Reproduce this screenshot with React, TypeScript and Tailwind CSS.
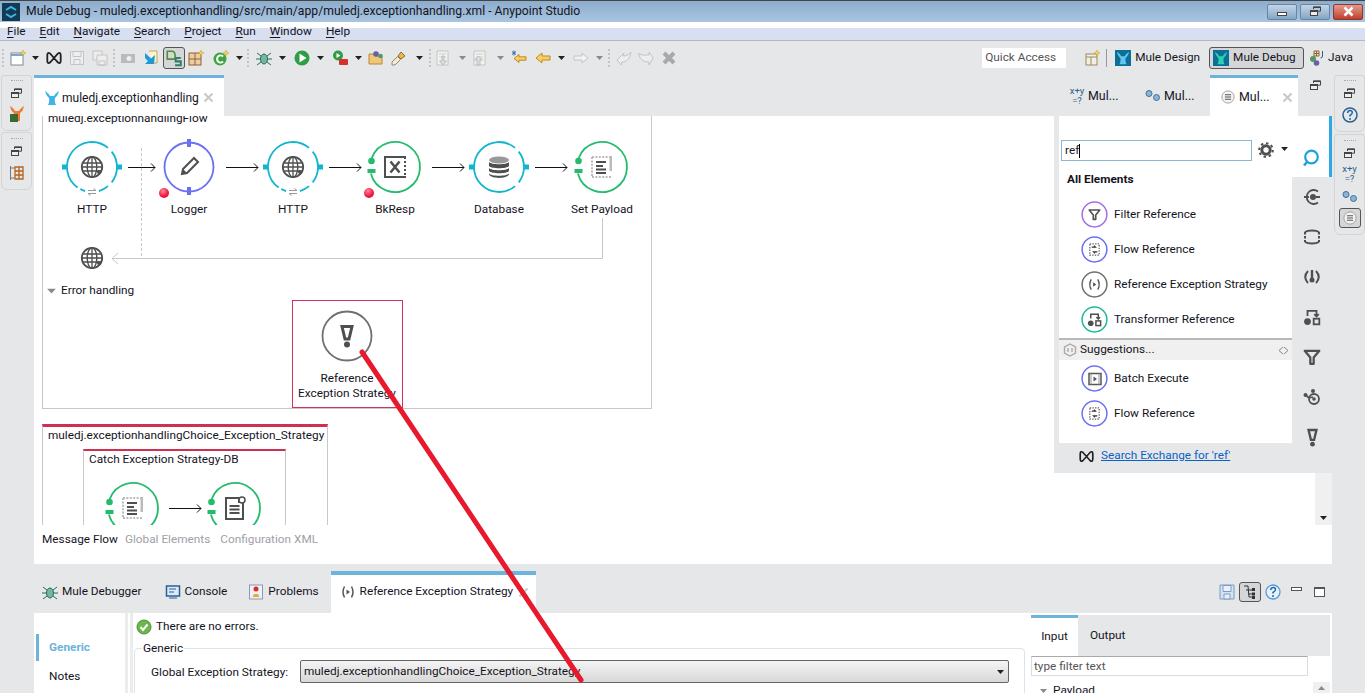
import type { ReactNode } from 'react'

const ink = '#4f4f4f'

function Svg({ s = 16, vb = 16, className = '', children }: { s?: number; vb?: number; className?: string; children: ReactNode }) {
  return (
    <svg width={s} height={s} viewBox={`0 0 ${vb} ${vb}`} fill="none" className={`shrink-0 ${className}`}>
      {children}
    </svg>
  )
}

const Caret = ({ className = '', dim = false }: { className?: string; dim?: boolean }) => (
  <svg width="7" height="4" viewBox="0 0 7 4" className={`shrink-0 ${className}`}>
    <path d="M0 0h7L3.5 4z" fill={dim ? '#8a8a8a' : '#222'} />
  </svg>
)
const Grip = ({ className = '' }: { className?: string }) => (
  <span className={`h-[18px] w-[2px] shrink-0 border-l-2 border-dotted border-[#c4c4c4] ${className}`} />
)
const Restore = ({ className = '' }: { className?: string }) => (
  <Svg s={11} vb={11} className={className}>
    <path d="M3.5 3V.8h7v4.4H8" stroke="#444" />
    <rect x=".5" y="4.5" width="7" height="5" stroke="#444" fill="#eee" />
    <path d="M.5 5.5h7M3.5 1.5h7" stroke="#444" />
  </Svg>
)
const Close = ({ className = '' }: { className?: string }) => (
  <Svg s={11} vb={11} className={className}>
    <path d="M1.5 1.5l8 8M9.500 1.5l-8 8" stroke="#c8c8c8" strokeWidth="2" />
  </Svg>
)
const MuleLogo = ({ s = 16, c = '#3db4ea' }: { s?: number; c?: string }) => (
  <Svg s={s}>
    <path d="M1 1c1 4 3 6 4 7 .5 3 0 5-1 7h8c-1-2-1.5-4-1-7 1-1 3-3 4-7-2 1-4 3-5 5H6C5 4 3 2 1 1z" fill={c} />
  </Svg>
)
const XY = ({ className = '' }: { className?: string }) => (
  <span className={`w-[16px] shrink-0 text-center text-[9.5px] leading-[10px] text-[#2d5f8e] ${className}`}>x+y<br />=?</span>
)
const Dots = ({ className = '' }: { className?: string }) => (
  <Svg className={className}>
    <circle cx="4" cy="5.5" r="3" fill="#8db4d6" stroke="#3f6f99" />
    <circle cx="11.5" cy="9.5" r="3" fill="#8db4d6" stroke="#3f6f99" />
  </Svg>
)
const MenuDoc = ({ s = 16 }: { s?: number }) => (
  <Svg s={s}>
    <circle cx="8" cy="8" r="7" stroke="#999" fill="#f4f4f4" />
    <path d="M4.5 5.5h7M4.5 8h7M4.500 10.500h7" stroke="#555" strokeWidth="1.200" />
  </Svg>
)
const Exchange = ({ s = 16, className = '' }: { s?: number; className?: string }) => (
  <Svg s={s} className={className}>
    <path d="M8 8L4 3.5Q1.5 1.800 1.300 5v6q.2 3.200 2.700 1.500l8-9Q14.500 1.800 14.700 5v6q-.2 3.200-2.700 1.500z" stroke="#222" strokeWidth="1.800" />
  </Svg>
)
const GearStar = ({ c }: { c: string }) => (
  <path d="M13 0l.9 2.100L16 3l-2.100.9L13 6l-.9-2.100L10 3l2.100-.9z" fill={c} stroke="#b8912f" strokeWidth=".4" />
)

function Globe({ s = 24 }: { s?: number }) {
  return (
    <Svg s={s} vb={24}>
      <circle cx="12" cy="12" r="10.200" stroke={ink} strokeWidth="1.800" />
      <ellipse cx="12" cy="12" rx="4.800" ry="10.200" stroke={ink} strokeWidth="1.400" />
      <path d="M12 2v20M2.500 8h19M2 12h20M2.500 16h19" stroke={ink} strokeWidth="1.300" />
      <circle cx="19" cy="17" r="2" fill={ink} />
    </Svg>
  )
}

const pol = (a: number, r = 25) => {
  const t = (a * Math.PI) / 180
  return `${(32 + r * Math.cos(t)).toFixed(2)} ${(32 + r * Math.sin(t)).toFixed(2)}`
}
const arc = (a: number, b: number) => `M${pol(a)}A25 25 0 ${b - a > 180 ? 1 : 0} 1 ${pol(b)}`

function Ring({ kind, children }: { kind: 'source' | 'proc' | 'green' | 'gray' | 'conn'; children: ReactNode }) {
  const cyan = '#12b5d0'
  const green = '#25bb6d'
  const blue = '#6b70f5'
  return (
    <div className="relative h-[64px] w-[64px] shrink-0">
      <svg width="64" height="64" viewBox="0 0 64 64" fill="none" className="absolute inset-0">
        {kind === 'source' && (
          <g stroke={cyan} strokeWidth="1.800">
            <path d={arc(125, 310)} />
            <path d={arc(-38, 38)} />
            <path d={arc(50, 74)} />
            <path d={arc(106, 118)} />
            <rect x="2.5" y="30" width="4" height="4" fill={cyan} strokeWidth="1" />
            <rect x="57.5" y="30" width="4" height="4" fill={cyan} strokeWidth="1" />
            <path d="M28 55.500h8l-2.500-2M36 58.500h-8l2.500 2" stroke="#999" strokeWidth="1" />
          </g>
        )}
        {kind === 'conn' && (
          <g stroke={cyan} strokeWidth="1.800">
            <path d={arc(50, 310)} />
            <path d={arc(-38, 38)} />
            <rect x="2.5" y="30" width="4" height="4" fill={cyan} strokeWidth="1" />
            <rect x="57.5" y="30" width="4" height="4" fill={cyan} strokeWidth="1" />
          </g>
        )}
        {kind === 'proc' && (
          <g>
            <circle cx="32" cy="32" r="24.500" stroke={blue} strokeWidth="1.800" />
            <rect x="30" y="4" width="4" height="8" fill={blue} />
            <rect x="30" y="52" width="4" height="8" fill={blue} />
          </g>
        )}
        {kind === 'green' && (
          <g>
            <path d={arc(-160, 165)} stroke={green} strokeWidth="1.800" />
            <circle cx="8.5" cy="26" r="3.300" fill={green} />
            <rect x="4.5" y="34" width="8" height="4" fill={green} />
          </g>
        )}
        {kind === 'gray' && <circle cx="32" cy="32" r="24.500" stroke="#707070" strokeWidth="1.800" />}
      </svg>
      <div className="absolute inset-0 flex items-center justify-center">{children}</div>
    </div>
  )
}

function PayloadIcon() {
  return (
    <Svg s={24} vb={24}>
      <path d="M2 2h18M2 22h20M2 2v20" stroke="#bbb" strokeWidth="2" strokeDasharray="2 1.400" />
      <rect x="19.5" y="1" width="2.500" height="15" fill="#bbb" />
      <path d="M6 7h10M6 11h7M6 14.500h10M6 18h10" stroke={ink} strokeWidth="2" />
    </Svg>
  )
}
function Exclaim({ s = 24, c = ink }: { s?: number; c?: string }) {
  return (
    <Svg s={s} vb={24}>
      <path d="M7 2.500h10l-3 12.500h-4z" stroke={c} strokeWidth="3" />
      <circle cx="12" cy="20.500" r="3" fill={c} />
    </Svg>
  )
}
const FlowRefIcon = ({ s = 16 }: { s?: number }) => (
  <Svg s={s}>
    <path d="M3 2h10v12H3z" stroke="#666" strokeWidth="1.300" strokeDasharray="1.500 1.300" />
    <path d="M5 5.500h4L7.500 4M11 10.500H7L8.500 12" stroke="#333" strokeWidth="1.300" />
  </Svg>
)
const RefExIcon = ({ s = 16 }: { s?: number }) => (
  <Svg s={s}>
    <path d="M4.500 2.500Q1.500 8 4.500 13.500M11.500 2.500Q14.500 8 11.500 13.500" stroke="#555" strokeWidth="1.500" />
    <path d="M6.500 5.500L10 8l-3.500 2.500z" fill="#555" />
  </Svg>
)
const FilterIcon = ({ s = 16, c = ink }: { s?: number; c?: string }) => (
  <Svg s={s}>
    <path d="M1.500 2.500h13l-5 6V14h-3V8.500z" stroke={c} strokeWidth="2" strokeLinejoin="round" />
  </Svg>
)
const TransIcon = ({ s = 16, c = ink }: { s?: number; c?: string }) => (
  <Svg s={s}>
    <circle cx="4" cy="12" r="3" fill={c} />
    <rect x="9.5" y="9.5" width="5" height="5" stroke={c} strokeWidth="1.600" />
    <path d="M4 7V2.500h8V7M10 5.500l2 2 2-2" stroke={c} strokeWidth="1.600" />
  </Svg>
)
const BatchIcon = () => (
  <Svg>
    <rect x="2" y="2.500" width="12" height="11" stroke="#555" strokeWidth="1.500" />
    <path d="M6.500 5.500L10 8l-3.500 2.500z" fill="#555" />
    <path d="M4 2.500v11M12 2.500v11" stroke="#999" />
  </Svg>
)

function PaletteItem({ color, label, children, className = '' }: { color: string; label: string; children: ReactNode; className?: string }) {
  return (
    <div className={`flex h-[35px] items-center pl-[22px] ${className}`}>
      <svg width="27" height="27" viewBox="0 0 27 27" className="shrink-0">
        <circle cx="13.500" cy="13.500" r="12.400" fill="none" stroke={color} strokeWidth="1.500" />
      </svg>
      <span className="-ml-[21px] flex w-[15px] shrink-0 justify-center">{children}</span>
      <span className="ml-[12px]">{label}</span>
    </div>
  )
}

function Node({ label, className, children }: { label: ReactNode; className: string; children: ReactNode }) {
  return (
    <div className={`absolute flex w-[120px] flex-col items-center ${className}`}>
      {children}
      <div className="mt-[3px] text-center leading-[15px]">{label}</div>
    </div>
  )
}

const BreakDot = ({ className }: { className: string }) => (
  <span className={`absolute h-[10px] w-[10px] rounded-full bg-[radial-gradient(circle_at_40%_30%,#ff8a9c,#f0103c_60%)] ${className}`} />
)

function Canvas() {
  return (
    <div className="relative h-full w-[1020px] shrink-0 overflow-hidden bg-white">
      {/* flujo principal */}
      <div className="absolute left-[8px] top-[-20px] h-[313px] w-[610px] border-b border-l border-r border-[#c8c8c8]" />
      <div className="absolute left-[14px] top-[-5px] leading-[15px]">muledj.exceptionhandlingFlow</div>
      <svg width="1020" height="409" className="absolute inset-0" fill="none">
        {[[94, 121], [192, 224], [295, 327], [398, 430], [501, 533]].map(([a, b]) => (
          <g key={a} stroke="#111">
            <path d={`M${a} 51.5H${b}`} />
            <path d={`M${b - 4} 47.5l4 4-4 4`} />
          </g>
        ))}
        <path d="M107.500 32v108" stroke="#c8c8c8" strokeDasharray="3 2" />
        <path d="M568.500 102v40.500H78" stroke="#c8c8c8" />
        <path d="M84 137l-6 5.500 6 5.500" stroke="#c8c8c8" />
        <path d="M135 392.500h32M163 388.500l4 4-4 4" stroke="#111" />
      </svg>
      <Node label="HTTP" className="left-[-2px] top-[19px]">
        <Ring kind="source"><Globe /></Ring>
      </Node>
      <Node label="Logger" className="left-[95px] top-[19px]">
        <Ring kind="proc">
          <Svg s={24} vb={24}>
            <path d="M5 19l1-5L17 3l4 4-11 11z" stroke={ink} strokeWidth="2" />
            <path d="M5 19l1-5 4 4z" fill={ink} />
          </Svg>
        </Ring>
      </Node>
      <Node label="HTTP" className="left-[199px] top-[19px]">
        <Ring kind="source"><Globe /></Ring>
      </Node>
      <Node label="BkResp" className="left-[301px] top-[19px]">
        <Ring kind="green">
          <Svg s={24} vb={24}>
            <path d="M23 2H2v20h21" stroke={ink} strokeWidth="2" />
            <path d="M22 2v20" stroke={ink} strokeWidth="2" strokeDasharray="2 2" />
            <path d="M7.500 6.500l9 11M16.500 6.500l-9 11" stroke={ink} strokeWidth="2.500" />
          </Svg>
        </Ring>
      </Node>
      <Node label="Database" className="left-[405px] top-[19px]">
        <Ring kind="conn">
          <Svg s={24} vb={24}>
            <ellipse cx="12" cy="5" rx="10" ry="3.500" fill="#999" />
            <path d="M2 7c2 3 18 3 20 0v4c-2 3-18 3-20 0zM2 13c2 3 18 3 20 0v3c-2 3-18 3-20 0zM2 18.500c2 3 18 3 20 0v1c-2 4.500-18 4.500-20 0z" fill={ink} />
          </Svg>
        </Ring>
      </Node>
      <Node label="Set Payload" className="left-[508px] top-[19px]">
        <Ring kind="green"><PayloadIcon /></Ring>
      </Node>
      <BreakDot className="left-[125px] top-[72px]" />
      <BreakDot className="left-[330px] top-[72px]" />
      <div className="absolute left-[46px] top-[130px]"><Globe /></div>
      <div className="absolute left-[14px] top-[167px] flex items-center gap-[6px] leading-[15px]">
        <Caret dim className="scale-[1.3]" />
        <span>Error handling</span>
      </div>
      <div className="absolute left-[258px] top-[184px] h-[108px] w-[111px] border border-[#d4305a]" />
      <Node
        label={<>Reference<br />Exception Strategy</>}
        className="left-[253px] top-[188px]"
      >
        <Ring kind="gray"><Exclaim /></Ring>
      </Node>
      {/* flujo de excepcion */}
      <div className="absolute left-[8px] top-[308px] h-[120px] w-[286px] border-x border-[#c8c8c8] border-t-[3px] border-t-[#cf2f52]" />
      <div className="absolute left-[14px] top-[312px] leading-[15px]">muledj.exceptionhandlingChoice_Exception_Strategy</div>
      <div className="absolute left-[49px] top-[333px] h-[100px] w-[203px] border-x border-[#c8c8c8] border-t-[2px] border-t-[#cf2f52]" />
      <div className="absolute left-[55px] top-[336px] leading-[15px]">Catch Exception Strategy-DB</div>
      <div className="absolute left-[67px] top-[360px]"><Ring kind="green"><PayloadIcon /></Ring></div>
      <div className="absolute left-[169px] top-[360px]">
        <Ring kind="green">
          <Svg s={24} vb={24}>
            <path d="M3 2h13v4h4v17H3z" stroke={ink} strokeWidth="2" />
            <path d="M6.500 10h10M6.500 13.500h10M6.500 17h10" stroke={ink} strokeWidth="1.800" />
            <circle cx="19" cy="4" r="3" fill="#fff" stroke={ink} strokeWidth="1.500" />
          </Svg>
        </Ring>
      </div>
    </div>
  )
}

function Palette() {
  const rail = 'flex h-[40px] items-center justify-center'
  return (
    <div className="flex h-[357px] bg-[#e6e7e9] pl-[5px]">
      <div className="flex w-[233px] flex-col">
        <div className="h-[327px] bg-white">
          <div className="flex h-[45px] items-end pl-[2px]">
            <div className="flex h-[21px] w-[191px] items-center border border-[#8ab8d4] pl-[3px] leading-none">
              ref<span className="h-[14px] w-px bg-black" />
            </div>
            <Svg className="mb-[3px] ml-[6px]" s={16} vb={16}>
              <circle cx="8" cy="8" r="4.200" stroke={ink} strokeWidth="3" />
              <circle cx="8" cy="8" r="6.800" stroke={ink} strokeWidth="2" strokeDasharray="2.500 2.800" />
            </Svg>
            <Caret className="mb-[10px] ml-[7px]" />
          </div>
          <div className="mt-[11px] h-[15px] pl-[8px] font-bold leading-[15px]">All Elements</div>
          <div className="mt-[10px]">
            <PaletteItem color="#a06fe8" label="Filter Reference"><FilterIcon s={13} /></PaletteItem>
            <PaletteItem color="#6b70f5" label="Flow Reference"><FlowRefIcon s={15} /></PaletteItem>
            <PaletteItem color="#707070" label="Reference Exception Strategy"><RefExIcon s={15} /></PaletteItem>
            <PaletteItem color="#1fb89a" label="Transformer Reference"><TransIcon s={15} /></PaletteItem>
          </div>
          <div className="mt-[1px] flex h-[22px] items-center border-t-2 border-[#b8b8b8] bg-[#f0f0f0] pl-[4px]">
            <Svg s={14} vb={14}>
              <path d="M7 1l5.500 3v6L7 13l-5.500-3V4z" stroke="#aaa" strokeWidth="1.400" />
              <path d="M5 5v4M9 5v4" stroke="#aaa" strokeWidth="1.400" />
            </Svg>
            <span className="ml-[3px]">Suggestions...</span>
            <Svg s={11} vb={11} className="ml-auto mr-[3px]">
              <path d="M5 2L1 5.500 5 9M6 2l4 3.500L6 9" stroke="#888" />
            </Svg>
          </div>
          <PaletteItem color="#6b70f5" label="Batch Execute" className="mt-[1px]"><BatchIcon /></PaletteItem>
          <PaletteItem color="#6b70f5" label="Flow Reference"><FlowRefIcon s={15} /></PaletteItem>
        </div>
        <div className="flex h-[26px] items-center pl-[20px]">
          <Exchange s={15} />
          <span className="ml-[7px] text-[#0a62c4] underline">Search Exchange for 'ref'</span>
        </div>
      </div>
      <div className="flex w-[40px] flex-col items-center">
        <div className="flex h-[61px] w-full items-end justify-center border-r-[3px] border-[#2ea8e0] bg-white pb-[10px]">
          <Svg s={18} vb={18}>
            <circle cx="9.500" cy="8" r="6.300" stroke="#1aa3dd" strokeWidth="2.200" />
            <path d="M5 13l-3 3.500" stroke="#1aa3dd" strokeWidth="2.500" />
          </Svg>
        </div>
        <div className={rail}>
          <Svg s={18} vb={18}>
            <circle cx="10" cy="9" r="3" fill={ink} />
            <path d="M15 3.500a7 7 0 1 0 0 11M1 9h5M13 9h4" stroke={ink} strokeWidth="1.800" />
          </Svg>
        </div>
        <div className={rail}>
          <Svg s={18} vb={18}>
            <path d="M2 4c3-2 11-2 14 0M2 14c3 2 11 2 14 0" stroke={ink} strokeWidth="2" />
            <path d="M2 4v10M16 4v10" stroke={ink} strokeWidth="2" strokeDasharray="2.500 1.500" />
          </Svg>
        </div>
        <div className={rail}>
          <Svg s={18} vb={18}>
            <path d="M5 3Q-.5 9 5 15M13 3q5.500 6 0 12" stroke={ink} strokeWidth="2" />
            <path d="M9 2v8" stroke={ink} strokeWidth="2.400" />
            <circle cx="9" cy="12" r="2.500" fill={ink} />
          </Svg>
        </div>
        <div className={rail}><TransIcon s={18} /></div>
        <div className={rail}><FilterIcon s={18} /></div>
        <div className={rail}>
          <Svg s={18} vb={18}>
            <circle cx="10" cy="3" r="2" fill={ink} />
            <circle cx="2.500" cy="7" r="2" fill={ink} />
            <path d="M3 7c2 3 3 3 7 2" stroke={ink} strokeWidth="1.800" />
            <circle cx="11" cy="11" r="5" stroke={ink} strokeWidth="1.800" />
            <circle cx="11" cy="11" r="1.800" fill={ink} />
          </Svg>
        </div>
        <div className={rail}><Exclaim s={19} /></div>
      </div>
    </div>
  )
}

function Toolbar() {
  return (
    <div className="flex h-[34px] shrink-0 items-center bg-[#e6e7e9] pl-[2px] pr-[12px]">
      <Grip />
      <Svg className="ml-[6px]">
        <rect x="1" y="3" width="12" height="12" fill="#fff" stroke="#7a8a9a" />
        <path d="M1 5h12" stroke="#7ba6cf" strokeWidth="2" />
        <GearStar c="#f4d35e" />
      </Svg>
      <Caret className="ml-[6px]" />
      <Exchange className="ml-[7px]" />
      <Svg className="ml-[7px]">
        <path d="M1.500 1.500h13v13h-13z" stroke="#c4c4c4" fill="#eee" />
        <path d="M4 1.500h8v5H4zM5 9.500h6v5H5z" stroke="#c4c4c4" />
      </Svg>
      <Svg className="ml-[7px]">
        <path d="M1 1h9v9H1z" stroke="#c4c4c4" fill="#eee" />
        <path d="M5 5h10v10H5z" stroke="#c4c4c4" fill="#eee" />
        <path d="M7 11h6v4H7z" stroke="#c4c4c4" />
      </Svg>
      <Grip className="ml-[5px]" />
      <Svg className="ml-[5px]">
        <rect x="1" y="4" width="14" height="9" fill="#bbb" />
        <circle cx="9" cy="8.500" r="2.500" fill="#eee" />
      </Svg>
      <Svg className="ml-[7px]">
        <path d="M6 1h8v12H9" stroke="#c7a552" fill="#fbf4d2" />
        <path d="M2 3l6 5.500L12 5l-1 9H2l3-3-3-3z" fill="#1f9ad9" />
      </Svg>
      <div className="ml-[4px] flex h-[22px] w-[22px] shrink-0 items-center justify-center rounded-[3px] border border-[#555] bg-[#d4d6d8]">
        <Svg s={18} vb={16}>
          <path d="M2 2h4q3 0 3 4v3H2z" stroke="#4f8f3a" strokeWidth="1.400" />
          <path d="M14 8H9.500v3H14v3.500H9" stroke="#2f7f6a" strokeWidth="1.800" />
        </Svg>
      </div>
      <Svg className="ml-[3px]">
        <rect x="1" y="3" width="12" height="12" fill="#e8cfa8" stroke="#96602b" />
        <path d="M7 3v12M1 9h12" stroke="#96602b" />
        <GearStar c="#f4d35e" />
      </Svg>
      <Svg className="ml-[9px]">
        <circle cx="7" cy="9" r="6.500" fill="#3ea53e" />
        <path d="M10 6.500a3.500 3.500 0 1 0 0 5" stroke="#fff" strokeWidth="2" />
        <GearStar c="#f4d35e" />
      </Svg>
      <Caret className="ml-[7px]" />
      <Grip className="ml-[4px]" />
      <Svg className="ml-[7px]">
        <ellipse cx="8" cy="9" rx="3.500" ry="5" fill="#72b8a0" stroke="#2c6a5a" />
        <path d="M1 3l4 3M15 3l-4 3M0 9h4M12 9h4M1 15l4-3M15 15l-4-3" stroke="#2c6a5a" />
      </Svg>
      <Caret className="ml-[7px]" />
      <Svg className="ml-[8px]">
        <circle cx="8" cy="8" r="7.500" fill="#2e9e46" />
        <path d="M5.500 3.500l7 4.500-7 4.500z" fill="#fff" />
      </Svg>
      <Caret className="ml-[7px]" />
      <Svg className="ml-[8px]">
        <circle cx="6" cy="5.500" r="5" fill="#2e9e46" />
        <path d="M4.500 3l4 2.500-4 2.500z" fill="#fff" />
        <rect x="7" y="9" width="9" height="6" rx="1" fill="#d62f2f" />
      </Svg>
      <Caret className="ml-[7px]" />
      <Svg className="ml-[6px]">
        <path d="M1 4h5l1 2h7v8H1z" fill="#f0c878" stroke="#b68a35" />
        <circle cx="8" cy="4" r="2.800" fill="#6a5fa8" />
        <circle cx="12.500" cy="6" r="2.300" fill="#4f9a6a" />
      </Svg>
      <Svg className="ml-[7px]">
        <path d="M10 2l4 4-4 3-3-3z" fill="#e8b64c" stroke="#96702b" />
        <path d="M6.500 6.500l3 3L4 15H1v-3z" fill="#f3ead0" stroke="#8c8c7a" />
      </Svg>
      <Caret className="ml-[9px]" />
      <Grip className="ml-[6px]" />
      <Svg className="ml-[3px]">
        <path d="M3 1h11v14H3z" stroke="#c4c4c4" fill="#f2f2f2" />
        <path d="M5 4h7M5 7h7" stroke="#c9d2bd" />
        <path d="M8 6v5H5.500L9 15l3.500-4H10V6z" fill="#ddd" stroke="#bbb" />
      </Svg>
      <Caret dim className="ml-[9px]" />
      <Svg className="ml-[5px]">
        <path d="M3 1h11v14H3z" stroke="#c4c4c4" fill="#f2f2f2" />
        <path d="M5 4h7M5 7h7" stroke="#c9d2bd" />
        <path d="M6 15v-5H3.500l4-4 4 4H9v5z" fill="#ddd" stroke="#bbb" />
      </Svg>
      <Caret dim className="ml-[10px]" />
      <Svg className="ml-[7px]">
        <path d="M3 8.500l5-4v2.300h7v3.400H8v2.300z" fill="#f6d067" stroke="#c08a1e" />
        <path d="M1 1.500l4 3M5 1.500l-4 3M3 .5v5" stroke="#3a6ba8" />
      </Svg>
      <Svg className="ml-[8px]">
        <path d="M1 8l6-5v3h8v4H7v3z" fill="#f6d067" stroke="#c08a1e" />
      </Svg>
      <Caret className="ml-[7px]" />
      <Svg className="ml-[8px]">
        <path d="M15 8L9 3v3H1v4h8v3z" fill="#f2f2f2" stroke="#c4c4c4" />
      </Svg>
      <Caret dim className="ml-[7px]" />
      <Grip className="ml-[5px]" />
      <Svg className="ml-[6px]">
        <path d="M1 10l4 5 1-3c4 0 8-3 9-10-2 3-5 4-8 4l1-3z" fill="#eee" stroke="#c4c4c4" />
      </Svg>
      <Svg className="ml-[6px]">
        <path d="M15 8l-4-6v3C7 5 3 6 1 3c0 6 4 9 10 9v3z" fill="#eee" stroke="#c4c4c4" />
      </Svg>
      <Svg className="ml-[7px]">
        <path d="M3 3l10 10M13 3L3 13" stroke="#a9a9a9" strokeWidth="4" />
      </Svg>
      <div className="ml-auto flex items-center">
        <div className="flex h-[20px] w-[84px] items-center bg-white pl-[3px] text-[#555]">Quick Access</div>
        <Svg className="ml-[18px]">
          <rect x="2" y="4" width="11" height="11" fill="#f4efe0" stroke="#9a8a60" />
          <path d="M2 7h11M7 7v8" stroke="#9a8a60" />
          <GearStar c="#f4d35e" />
        </Svg>
        <span className="ml-[6px] h-[18px] w-px bg-[#999]" />
        <div className="ml-[8px] flex h-[16px] w-[16px] items-center justify-center bg-[#0c6f98]">
          <MuleLogo s={14} c="#63c6f0" />
        </div>
        <span className="ml-[4px]">Mule Design</span>
        <div className="ml-[9px] flex h-[22px] w-[95px] items-center rounded-[3px] border border-[#555] bg-[#d4d6d8] pl-[3px]">
          <div className="flex h-[16px] w-[16px] items-center justify-center bg-[#0c6f98]">
            <MuleLogo s={14} c="#2fd0b0" />
          </div>
          <span className="ml-[4px]">Mule Debug</span>
        </div>
        <Svg className="ml-[4px]">
          <circle cx="5" cy="9" r="3" fill="#4f9a5a" />
          <circle cx="8.500" cy="13" r="2.800" fill="#6a5fa8" />
          <path d="M6 1h5v5H6zM8.500 1v5M6 3.500h5" stroke="#96602b" />
          <path d="M14.500 1v5q0 2-2 2" stroke="#2d5f8e" />
        </Svg>
        <span className="ml-[4px]">Java</span>
      </div>
    </div>
  )
}

const TrimBox = ({ className, children }: { className: string; children: ReactNode }) => (
  <div className={`flex w-[31px] flex-col items-center rounded-b-[6px] rounded-t-[3px] border border-[#d4d4d4] pt-[4px] ${className}`}>
    <span className="mb-[7px] h-px w-[12px] border-t border-dotted border-[#aaa]" />
    {children}
  </div>
)

export default function App() {
  return (
    <div className="relative flex h-[693px] w-[1365px] flex-col overflow-hidden bg-[#e6e7e9] font-['Roboto',sans-serif] text-[11.8px] text-[#14141e]">
      {/* barra de titulo */}
      <div className="flex h-[22px] shrink-0 items-center border-t border-[#444] bg-gradient-to-b from-[#8dadcd] to-[#a9c5e0] pl-[2px] text-[12.2px]">
        <div className="flex h-[18px] w-[18px] items-center justify-center bg-[#123a52]">
          <Svg s={14} vb={14}>
            <path d="M2 5l5-3 5 3M2 9l5 3 5-3" stroke="#3db4ea" strokeWidth="2" />
          </Svg>
        </div>
        <span className="ml-[6px]">Mule Debug - muledj.exceptionhandling/src/main/app/muledj.exceptionhandling.xml - Anypoint Studio</span>
        <div className="ml-auto mr-[2px] flex gap-[3px]">
          <div className="flex h-[16px] w-[30px] items-center justify-center rounded-[2px] border border-[#6a85a0] bg-gradient-to-b from-[#c3d6e8] to-[#86a5c4]">
            <span className="mt-[4px] h-[4px] w-[10px] border border-[#444] bg-white" />
          </div>
          <div className="flex h-[16px] w-[30px] items-center justify-center rounded-[2px] border border-[#6a85a0] bg-gradient-to-b from-[#c3d6e8] to-[#86a5c4]">
            <Restore />
          </div>
          <div className="flex h-[16px] w-[30px] items-center justify-center rounded-[2px] border border-[#8a3a30] bg-gradient-to-b from-[#e59a8c] to-[#bf3d2c]">
            <Svg s={11} vb={11}><path d="M1.500 1.500l8 8M9.500 1.500l-8 8" stroke="#fff" strokeWidth="2.500" /></Svg>
          </div>
        </div>
      </div>
      {/* menu */}
      <div className="flex h-[19px] shrink-0 items-center border-b border-[#b2bac8] bg-gradient-to-b from-white from-[30%] to-[#d8dff0] to-[35%] pl-[7px] pt-[1px]">
        <div className="flex gap-[14px]">
          {['File', 'Edit', 'Navigate', 'Search', 'Project', 'Run', 'Window', 'Help'].map((m) => (
            <span key={m}><u className="decoration-1 underline-offset-2">{m[0]}</u>{m.slice(1)}</span>
          ))}
        </div>
      </div>
      <Toolbar />
      <div className="flex min-h-0 flex-1">
        {/* barra izquierda */}
        <div className="flex w-[34px] shrink-0 flex-col gap-[1px] pl-[1px]">
          <TrimBox className="h-[56px]">
            <Restore />
            <Svg s={18} vb={18} className="mt-[6px]">
              <path d="M2 1c1 4 2 6 4 7v8h6V8c2-1 3-3 4-7-2 1-4 3-5 5H7C6 4 4 2 2 1z" fill="#ef7a32" />
              <rect x="2" y="9" width="8" height="8" fill="#3a6a32" />
            </Svg>
          </TrimBox>
          <TrimBox className="h-[58px] pt-[5px]">
            <Restore />
            <Svg className="mt-[8px]">
              <path d="M1.500 1v14M1.500 3h4M1.500 13h4" stroke="#777" />
              <path d="M6 2h8v12H6zM6 6h8M6 10h8M10 2v12" stroke="#b5651d" strokeWidth="1.300" />
            </Svg>
          </TrimBox>
        </div>
        <div className="flex w-[1298px] shrink-0 flex-col">
          {/* editor */}
          <div className="flex h-[41px] shrink-0">
            <div className="flex w-[190px] items-center border-t-[3px] border-[#6cb4dc] bg-white pl-[10px] pt-[1px] text-[12px]">
              <MuleLogo />
              <span className="ml-[2px]">muledj.exceptionhandling</span>
              <Close className="ml-[4px]" />
            </div>
            <div className="ml-auto flex text-[12.4px]">
              <div className="flex w-[76px] items-center pt-[1px]"><XY /><span className="ml-[3px]">Mul...</span></div>
              <div className="flex w-[65px] items-center pt-[1px]"><Dots /><span className="ml-[3px]">Mul...</span></div>
              <div className="flex w-[88px] items-center border-t-[3px] border-[#6cb4dc] bg-white pl-[11px]">
                <MenuDoc s={14} />
                <span className="ml-[4px]">Mul...</span>
                <Close className="ml-[13px]" />
              </div>
              <div className="flex w-[34px] items-start justify-center pt-[5px]"><Restore /></div>
            </div>
          </div>
          <div className="flex h-[409px] shrink-0">
            <Canvas />
            <div className="flex w-[278px] flex-col bg-white">
              <Palette />
              <div className="flex flex-1 justify-end">
                <div className="flex w-[17px] flex-col items-center justify-end bg-[#f0f0f0] pb-[5px]"><Caret /></div>
              </div>
            </div>
          </div>
          <div className="flex h-[39px] shrink-0 items-center bg-white pb-[10px] pl-[8px]">
            <span>Message Flow</span>
            <span className="ml-[7px] text-[#a0a0a8]">Global Elements</span>
            <span className="ml-[10px] text-[#a0a0a8]">Configuration XML</span>
          </div>
          {/* panel inferior */}
          <div className="mt-[7px] flex h-[42px] shrink-0 items-center">
            <Svg className="ml-[8px]">
              <ellipse cx="8" cy="9" rx="3.500" ry="5" fill="#72b8a0" stroke="#2c6a5a" />
              <path d="M1 3l4 3M15 3l-4 3M0 9h4M12 9h4M1 15l4-3M15 15l-4-3" stroke="#2c6a5a" />
            </Svg>
            <span className="ml-[4px]">Mule Debugger</span>
            <Svg className="ml-[24px]">
              <rect x="1.500" y="2" width="13" height="10" fill="#dfe9f5" stroke="#2a5f9e" strokeWidth="1.500" />
              <path d="M4 14h8M4 5h7M4 8h5" stroke="#2a5f9e" />
            </Svg>
            <span className="ml-[3px]">Console</span>
            <Svg className="ml-[21px]">
              <rect x="1.500" y="1" width="13" height="14" fill="#eef2f8" stroke="#8a9ab0" />
              <circle cx="8" cy="5" r="2.500" fill="#d62f2f" />
              <path d="M4.500 13L6 10h4l1.500 3z" fill="#e8a63c" />
            </Svg>
            <span className="ml-[4px]">Problems</span>
            <div className="ml-[12px] flex h-[42px] w-[205px] items-center border-t-[4px] border-[#6cb4dc] bg-white pb-[4px] pl-[9px]">
              <RefExIcon />
              <span className="ml-[4px]">Reference Exception Strategy</span>
              <Close className="ml-[5px]" />
            </div>
            <div className="ml-auto flex items-center pr-[7px]">
              <Svg>
                <path d="M1 1h14v14H1z" fill="#d5e2f0" stroke="#7a9cc4" />
                <path d="M4 1.500h8v6H4zM5 10h6v5H5z" stroke="#7a9cc4" fill="#eef" />
              </Svg>
              <div className="ml-[4px] flex h-[20px] w-[22px] items-center justify-center rounded-[3px] border border-[#555] bg-[#d4d6d8]">
                <Svg s={14} vb={14}>
                  <path d="M1 1h4l1 11h6M3 5h8M5 9h6" stroke="#333" />
                  <rect x="9" y="3" width="3" height="3" fill="#333" />
                  <rect x="9" y="7.500" width="3" height="3" fill="#333" />
                  <rect x="9" y="11" width="3" height="3" fill="#333" />
                </Svg>
              </div>
              <Svg className="ml-[4px]">
                <circle cx="8" cy="8" r="7" fill="#e8f2fb" stroke="#5a9ad4" strokeWidth="1.300" />
                <path d="M5.500 6q.5-2.500 2.700-2.500 2.300 0 2.300 2 0 1.500-2.500 3v1" stroke="#1d6ab0" strokeWidth="1.500" />
                <circle cx="8" cy="12" r="1" fill="#1d6ab0" />
              </Svg>
              <span className="ml-[10px] mt-[-6px] h-[4px] w-[11px] border border-[#555] bg-white" />
              <span className="ml-[12px] h-[10px] w-[11px] border border-[#555] border-t-2 bg-white" />
            </div>
          </div>
          <div className="flex min-h-0 flex-1 bg-white pl-[2px]">
            <div className="flex w-[89px] shrink-0 flex-col pt-[21px]">
              <div className="flex h-[27px] items-center border-l-[3px] border-[#6cb4dc] pl-[10px] font-bold text-[#6cb4dc]">Generic</div>
              <div className="mt-[1px] flex h-[29px] items-center pl-[13px]">Notes</div>
            </div>
            <div className="w-[8px] shrink-0 border-x-[3px] border-[#ececec]" />
            <div className="w-[892px] shrink-0 pl-[1px]">
              <div className="ml-[2px] flex h-[27px] items-center">
                <Svg>
                  <circle cx="8" cy="8" r="7" fill="#6ab84a" stroke="#4b8f3a" />
                  <path d="M4.500 8L7 11l4.500-5.500" stroke="#fff" strokeWidth="2" />
                </Svg>
                <span className="ml-[4px]">There are no errors.</span>
              </div>
              <div className="relative mt-[8px] h-[50px] rounded-[4px] border border-[#dde3ec]">
                <span className="absolute left-[7px] top-[-8px] bg-white px-[1px] leading-[15px]">Generic</span>
                <div className="flex h-full items-start pl-[16px] pt-[11px]">
                  <span className="mt-[4px] w-[149px]">Global Exception Strategy:</span>
                  <div className="flex h-[23px] w-[709px] items-center rounded-[2px] border border-[#666] bg-gradient-to-b from-[#f4f4f4] to-[#d8d8d8] pl-[3px]">
                    muledj.exceptionhandlingChoice_Exception_Strategy
                    <Caret className="ml-auto mr-[4px]" />
                  </div>
                </div>
              </div>
            </div>
            <div className="ml-[6px] w-[299px] shrink-0">
              <div className="mt-[2px] flex h-[41px] bg-[#e6e7e9]">
                <div className="flex w-[47px] items-center justify-center border-t-[3px] border-[#6cb4dc] bg-white">Input</div>
                <div className="ml-[12px] flex items-center">Output</div>
              </div>
              <div className="flex h-[20px] w-[277px] items-center border border-[#d8dce4] border-t-[#aaa] pl-[2px] pt-[1px] text-[#555]">type filter text</div>
              <div className="mt-[6px] flex">
                <Caret dim className="ml-[9px] mt-[7px]" />
                <span className="ml-[6px]">Payload</span>
                <div className="ml-auto flex h-[20px] w-[17px] justify-center bg-[#f0f0f0] pt-[4px]">
                  <Caret dim className="rotate-180" />
                </div>
              </div>
            </div>
          </div>
        </div>
        {/* barra derecha */}
        <div className="flex flex-1 flex-col gap-[2px] pl-[2px]">
          <TrimBox className="h-[57px]">
            <Restore />
            <Svg s={18} vb={18} className="mt-[7px]">
              <circle cx="9" cy="9" r="7" stroke="#2d5f8e" strokeWidth="1.500" />
              <path d="M6.500 7Q7 4.500 9 4.500q2.300 0 2.300 2 0 1.500-2.300 3v1" stroke="#1d6ab0" strokeWidth="1.500" />
              <circle cx="9" cy="13" r="1" fill="#1d6ab0" />
            </Svg>
          </TrimBox>
          <TrimBox className="h-[101px] pt-[5px]">
            <Restore />
            <XY className="mt-[5px]" />
            <Dots className="mt-[5px]" />
            <div className="mt-[3px] flex h-[20px] w-[22px] items-center justify-center rounded-[3px] border border-[#555] bg-[#d4d6d8]"><MenuDoc s={14} /></div>
          </TrimBox>
        </div>
      </div>
      {/* flecha roja */}
      <svg width="1365" height="693" className="pointer-events-none absolute inset-0">
        <path d="M362 352L581 680" stroke="#e8192c" strokeWidth="5" strokeLinecap="round" />
      </svg>
    </div>
  )
}
